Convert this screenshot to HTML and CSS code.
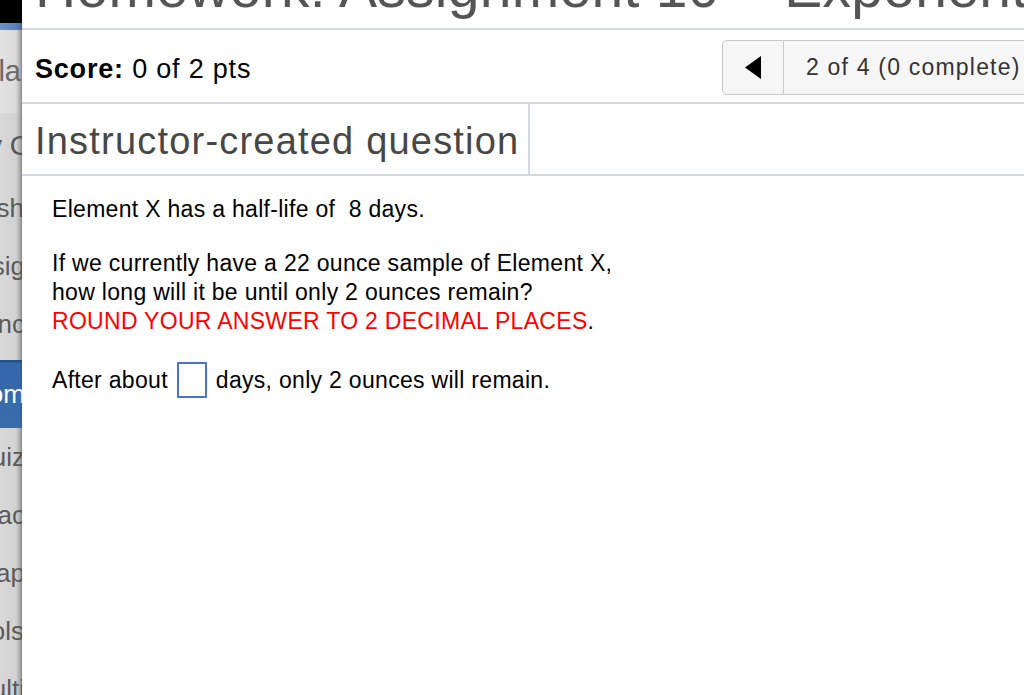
FILE: index.html
```html
<!DOCTYPE html>
<html lang="en">
<head>
<meta charset="utf-8">
<title>Homework: Assignment 10</title>
<link rel="stylesheet" href="styles.css">
</head>
<body>
<div class="app">
  <nav class="sidebar">
    <div class="side-black"></div>
    <div class="side-blue"></div>
    <div class="side-item side-top"><span class="cut-1">Cla</span></div>
    <div class="side-item side-course"><span class="cut8">My C</span></div>
    <div class="side-item"><span class="cut2">Dash</span></div>
    <div class="side-item"><span class="cut3">Assig</span></div>
    <div class="side-item"><span class="cut3">Annc</span></div>
    <div class="side-item side-active"><span class="cut3">Hom</span></div>
    <div class="side-item"><span class="cut3">Quiz</span></div>
    <div class="side-item"><span class="cut3">Prac</span></div>
    <div class="side-item"><span class="cut3">Chap</span></div>
    <div class="side-item"><span class="cut2">Tools</span></div>
    <div class="side-item"><span class="cut3">Multi</span></div>
  </nav>
  <main class="main">
    <div class="title-bar">
      <h1 class="title">Homework: Assignment 10 &ndash;&nbsp;Exponential Growth and Decay</h1>
    </div>
    <div class="score-row">
      <div class="score"><b>Score:</b> 0 of 2 pts</div>
      <div class="qnav">
        <button class="nav-btn nav-prev" type="button" aria-label="Previous question">
          <svg width="16" height="23" viewBox="0 0 16 23"><polygon points="16,0 16,23 0,11.5" fill="#000"/></svg>
        </button>
        <button class="nav-btn nav-pos" type="button">2 of 4 (0 complete)</button>
        <button class="nav-btn nav-next" type="button" aria-label="Next question">
          <svg width="16" height="23" viewBox="0 0 16 23"><polygon points="0,0 0,23 16,11.5" fill="#000"/></svg>
        </button>
      </div>
    </div>
    <div class="q-head">
      <h2 class="q-title">Instructor-created question</h2>
    </div>
    <div class="q-body">
      <p class="p1">Element X has a half-life of&nbsp; 8 days.</p>
      <p class="p2">If we currently have a 22 ounce sample of Element X,<br>how long will it be until only 2 ounces remain?<br><span class="red">ROUND YOUR ANSWER TO 2 DECIMAL PLACES</span>.</p>
      <div class="p3">
        <span>After about</span>
        <input class="answer" type="text" aria-label="answer">
        <span>days, only 2 ounces will remain.</span>
      </div>
    </div>
  </main>
</div>
</body>
</html>
```

FILE: styles.css
```css
html, body {
  margin: 0;
  padding: 0;
  background: #fff;
  overflow: hidden;
}

body {
  font-family: "Liberation Sans", Arial, Helvetica, sans-serif;
}

.app {
  display: flex;
  width: 1024px;
  height: 695px;
  overflow: hidden;
}

/* ---------- sidebar (mostly hidden) ---------- */
.sidebar {
  flex: none;
  width: 22px;
  display: flex;
  flex-direction: column;
  overflow: hidden;
  background: linear-gradient(to right, #d9d9d9 0, #d2d2d2 16px, #b4b4b4 19px, #9c9c9c 22px);
}

.side-black {
  height: 23px;
  background: #000;
  flex: none;
}

.side-blue {
  height: 7px;
  flex: none;
  background: linear-gradient(to right, #6f93c4 0, #5a82ba 16px, #4a6e9e 22px);
}

.side-item {
  flex: none;
  height: 58px;
  display: flex;
  justify-content: flex-end;
  align-items: center;
  overflow: hidden;
  white-space: nowrap;
  color: #5a5a5a;
  font-size: 26px;
}

.side-top {
  height: 83px;
  font-size: 29px;
  color: #6a6a6a;
  background: linear-gradient(to right, #e2e2e2 0, #dadada 16px, #b8b8b8 19px, #a0a0a0 22px);
}

.side-course {
  height: 66px;
  font-size: 28px;
  color: #555;
}

.side-active {
  height: 68px;
  margin-top: 7px;
  color: #fff;
  background: linear-gradient(to bottom, #27518a 0, #27518a 2px, #3467aa 3px, #3a6cad 100%);
}

.cut-1 { margin-right: 1px; }
.cut2 { margin-right: -2px; }
.cut3 { margin-right: -3px; }
.cut8 { margin-right: -8px; }

/* ---------- main ---------- */
.main {
  flex: 1;
  min-width: 0;
  overflow: hidden;
  background: #fff;
  box-shadow: -1px 0 2px rgba(0, 0, 0, 0.15);
}

.title-bar {
  height: 28px;
  overflow: hidden;
  border-bottom: 2px solid #d3d8e2;
}

.title {
  margin: -42px 0 0 13px;
  font-size: 57px;
  line-height: 58px;
  font-weight: normal;
  letter-spacing: 0.3px;
  color: #555;
  white-space: nowrap;
}

.score-row {
  height: 72px;
  display: grid;
  grid-template-columns: 687px auto;
  align-items: center;
  padding-left: 13px;
  border-bottom: 2px solid #d3d8e2;
}

.score {
  font-size: 27px;
  letter-spacing: 0.8px;
  color: #000;
  white-space: nowrap;
  padding-top: 7px;
}

.score b {
  font-weight: bold;
}

.qnav {
  display: flex;
  height: 55px;
  margin-top: 3px;
}

.nav-btn {
  margin: 0;
  height: 55px;
  background: #f6f6f6;
  border: 1px solid #c9c9c9;
  font-family: inherit;
  color: #333;
  display: flex;
  align-items: center;
  justify-content: center;
  flex: none;
}

.nav-prev {
  width: 62px;
  border-radius: 5px 0 0 5px;
}

.nav-pos {
  border-left: none;
  padding: 0 22px;
  font-size: 23px;
  letter-spacing: 1.2px;
  white-space: nowrap;
}

.nav-next {
  width: 62px;
  border-left: none;
  border-radius: 0 5px 5px 0;
}

.q-head {
  height: 70px;
  display: flex;
  padding-left: 13px;
  border-bottom: 2px solid #d3d8e2;
}

.q-title {
  margin: 0;
  padding: 5px 9px 0 0;
  display: flex;
  align-items: center;
  font-size: 38px;
  font-weight: normal;
  letter-spacing: 1.2px;
  color: #474747;
  border-right: 2px solid #d3d8e2;
  white-space: nowrap;
}

.q-body {
  padding: 19px 0 0 30px;
  font-size: 23px;
  letter-spacing: 0.3px;
  line-height: 29px;
  color: #000;
}

.q-body p {
  margin: 0;
}

.p2 {
  margin-top: 25px !important;
}

.red {
  color: #ff0000;
}

.p3 {
  margin-top: 26px;
  display: flex;
  align-items: center;
  gap: 9px;
  white-space: nowrap;
}

.answer {
  box-sizing: border-box;
  width: 30px;
  height: 36px;
  margin: 0;
  padding: 0;
  border: 2px solid #4476cf;
  border-radius: 1px;
  background: #fff;
}
```
